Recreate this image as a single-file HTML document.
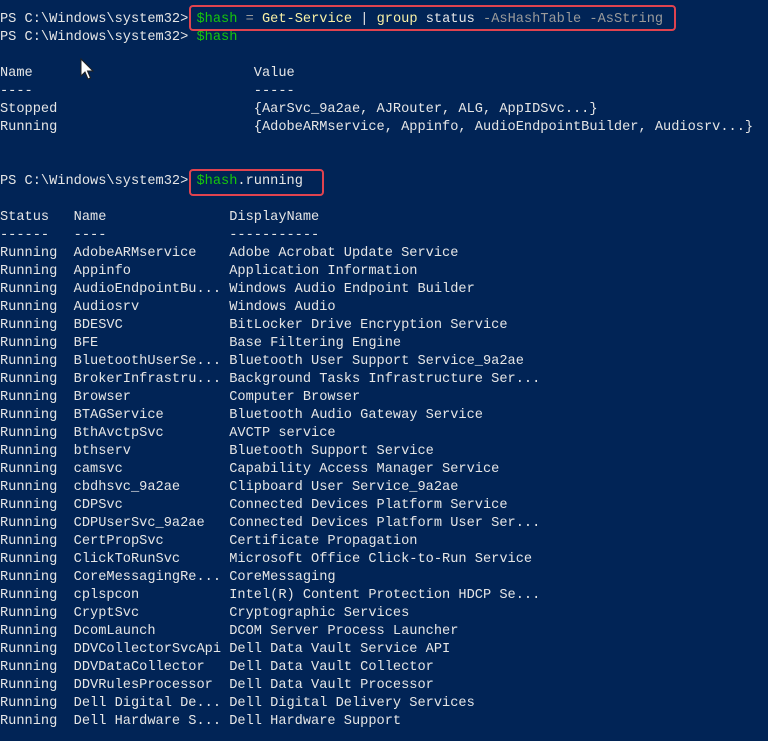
<!DOCTYPE html>
<html><head><meta charset="utf-8"><style>
html,body{margin:0;padding:0;background:#012456;width:768px;height:741px;overflow:hidden}
pre{position:absolute;left:0;top:11px;margin:0;font-family:"Liberation Mono",monospace;font-size:13.65px;line-height:18px;color:#e6e6e6;white-space:pre}
.y{color:#f9f1a5}.g{color:#16c60c}.d{color:#9a9a9a}
.box{position:absolute;border:2.5px solid #e0434f;border-radius:4px;box-sizing:border-box}
</style></head><body>
<pre>PS C:\Windows\system32&gt; <span class="g">$hash</span> <span class="d">=</span> <span class="y">Get-Service</span> | <span class="y">group</span> status <span class="d">-AsHashTable -AsString</span>
PS C:\Windows\system32&gt; <span class="g">$hash</span>

Name                           Value
----                           -----
Stopped                        {AarSvc_9a2ae, AJRouter, ALG, AppIDSvc...}
Running                        {AdobeARMservice, Appinfo, AudioEndpointBuilder, Audiosrv...}


PS C:\Windows\system32&gt; <span class="g">$hash</span>.running

Status   Name               DisplayName
------   ----               -----------
Running  AdobeARMservice    Adobe Acrobat Update Service
Running  Appinfo            Application Information
Running  AudioEndpointBu... Windows Audio Endpoint Builder
Running  Audiosrv           Windows Audio
Running  BDESVC             BitLocker Drive Encryption Service
Running  BFE                Base Filtering Engine
Running  BluetoothUserSe... Bluetooth User Support Service_9a2ae
Running  BrokerInfrastru... Background Tasks Infrastructure Ser...
Running  Browser            Computer Browser
Running  BTAGService        Bluetooth Audio Gateway Service
Running  BthAvctpSvc        AVCTP service
Running  bthserv            Bluetooth Support Service
Running  camsvc             Capability Access Manager Service
Running  cbdhsvc_9a2ae      Clipboard User Service_9a2ae
Running  CDPSvc             Connected Devices Platform Service
Running  CDPUserSvc_9a2ae   Connected Devices Platform User Ser...
Running  CertPropSvc        Certificate Propagation
Running  ClickToRunSvc      Microsoft Office Click-to-Run Service
Running  CoreMessagingRe... CoreMessaging
Running  cplspcon           Intel(R) Content Protection HDCP Se...
Running  CryptSvc           Cryptographic Services
Running  DcomLaunch         DCOM Server Process Launcher
Running  DDVCollectorSvcApi Dell Data Vault Service API
Running  DDVDataCollector   Dell Data Vault Collector
Running  DDVRulesProcessor  Dell Data Vault Processor
Running  Dell Digital De... Dell Digital Delivery Services
Running  Dell Hardware S... Dell Hardware Support</pre>
<div class="box" style="left:189px;top:5px;width:487px;height:26px"></div>
<div class="box" style="left:189px;top:169px;width:135px;height:27px"></div>
<svg style="position:absolute;left:80px;top:58px" width="16" height="24" viewBox="0 0 16 24"><path d="M1 1 L1 18 L5 14 L8 21 L10.5 20 L7.5 13 L13 13 Z" fill="#fff" stroke="#222" stroke-width="1"/></svg>
</body></html>
